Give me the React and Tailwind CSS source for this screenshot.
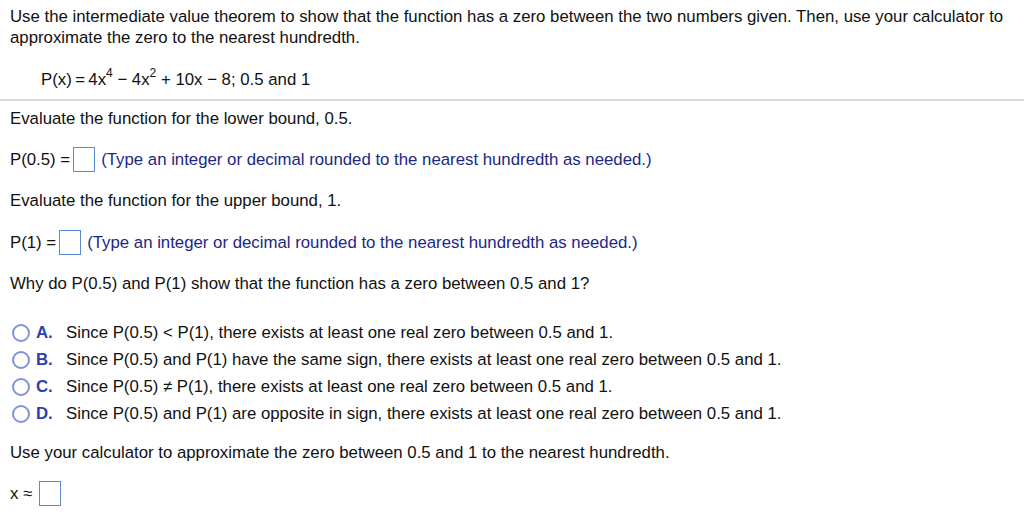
export default function App() {
  const options = [
    { key: "A.", text: "Since P(0.5) < P(1), there exists at least one real zero between 0.5 and 1." },
    { key: "B.", text: "Since P(0.5) and P(1) have the same sign, there exists at least one real zero between 0.5 and 1." },
    { key: "C.", text: "Since P(0.5) \u2260 P(1), there exists at least one real zero between 0.5 and 1." },
    { key: "D.", text: "Since P(0.5) and P(1) are opposite in sign, there exists at least one real zero between 0.5 and 1." },
  ];

  const AnswerBox = () => (
    <span className="inline-block w-[22px] h-[25px] border border-[#5b8ad6] bg-white"></span>
  );

  return (
    <div className="w-[1024px] h-[519px] bg-white text-[#111] text-[16.8px] font-['Liberation_Sans',Arial,sans-serif] overflow-hidden">
      <div className="px-[10px] pt-[6px]">
        <p className="leading-[21px]">
          Use the intermediate value theorem to show that the function has a zero between the two numbers given. Then, use your calculator to
          approximate the zero to the nearest hundredth.
        </p>
        <p className="mt-[21px] ml-[31px] leading-[21px]">
          P(x){"\u2009=\u2009"}4x<sup className="text-[12px] top-[-0.7em]">4</sup> {"\u2212"} 4x<sup className="text-[12px] top-[-0.7em]">2</sup> + 10x {"\u2212"} 8; 0.5 and 1
        </p>
      </div>

      <div className="mt-[9px] h-[2px] bg-[#d5d9e3]"></div>

      <div className="px-[10px]">
        <p className="mt-[7px] leading-[21px]">Evaluate the function for the lower bound, 0.5.</p>

        <div className="mt-[18px] h-[25px] flex items-center">
          <span>P(0.5) =</span>
          <span className="ml-[3px] flex"><AnswerBox /></span>
          <span className="ml-[6px] text-[#1c2785]">(Type an integer or decimal rounded to the nearest hundredth as needed.)</span>
        </div>

        <p className="mt-[18px] leading-[21px]">Evaluate the function for the upper bound, 1.</p>

        <div className="mt-[19px] h-[25px] flex items-center">
          <span>P(1) =</span>
          <span className="ml-[3px] flex"><AnswerBox /></span>
          <span className="ml-[6px] text-[#1c2785]">(Type an integer or decimal rounded to the nearest hundredth as needed.)</span>
        </div>

        <p className="mt-[18px] leading-[21px]">Why do P(0.5) and P(1) show that the function has a zero between 0.5 and 1?</p>

        <div className="mt-[25px] flex flex-col">
          {options.map((o) => (
            <div key={o.key} className="h-[27px] flex items-center">
              <span className="ml-[2px] w-[18px] h-[18px] rounded-full border-2 border-[#7f93dc] bg-white"></span>
              <span className="ml-[6px] w-[30px] font-bold text-[#2f3eb3]">{o.key}</span>
              <span>{o.text}</span>
            </div>
          ))}
        </div>

        <p className="mt-[15px] leading-[21px]">Use your calculator to approximate the zero between 0.5 and 1 to the nearest hundredth.</p>

        <div className="mt-[18px] h-[25px] flex items-center">
          <span>x {"\u2248"}</span>
          <span className="ml-[7px] flex"><AnswerBox /></span>
        </div>
      </div>
    </div>
  );
}
